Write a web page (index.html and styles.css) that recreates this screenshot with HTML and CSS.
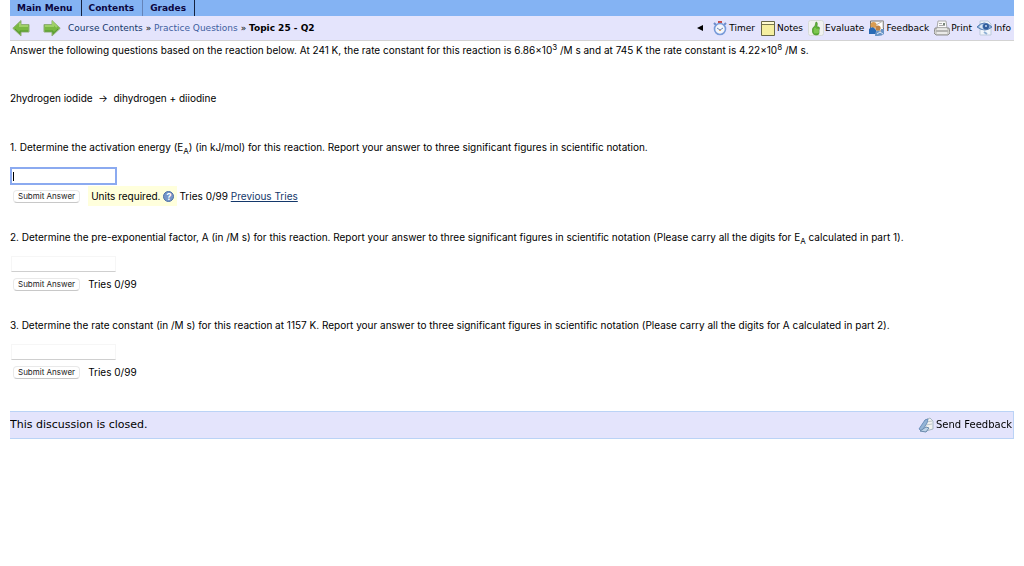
FILE: index.html
```html
<!DOCTYPE html>
<html lang="en">
<head>
  <meta charset="UTF-8">
  <title>Topic 25 - Q2</title>
  <link rel="stylesheet" href="styles.css">
</head>
<body>
  <nav class="menu">
    <a href="#">Main Menu</a>
    <a href="#">Contents</a>
    <a href="#">Grades</a>
  </nav>

  <div class="toolbar">
    <a class="arrow" href="#" aria-label="Previous">
      <svg width="18" height="18" viewBox="0 0 18 18"><path d="M9 1.500V5.500H17V13H9V17L.8 9.300Z" fill="#79b843" stroke="#8fae78"/><path d="M8 4V7H16" fill="none" stroke="#9fd069" stroke-width="2"/><path d="M3 10L8 14.500V12H16" fill="none" stroke="#54962f"/></svg>
    </a>
    <a class="arrow" href="#" aria-label="Next">
      <svg width="18" height="18" viewBox="0 0 18 18"><path d="M9 1.500V5.500H1V13H9V17L17.200 9.300Z" fill="#79b843" stroke="#8fae78"/><path d="M2 7H10V4L14 8" fill="none" stroke="#9fd069" stroke-width="2"/><path d="M2 12H10V14.500L15 10" fill="none" stroke="#54962f"/></svg>
    </a>
    <div class="crumbs">
      <a href="#">Course Contents</a> » <a class="light" href="#">Practice Questions</a> » <b>Topic 25 - Q2</b>
    </div>

    <div class="tools">
      <a class="collapse" href="#" aria-label="Collapse">
        <svg width="6" height="6" viewBox="0 0 6 6"><path d="M6 0V6L0 3Z" fill="#000"/></svg>
      </a>
      <a href="#">
        <svg width="16" height="16" viewBox="0 0 16 16"><path d="M6 1H10V3H6Z" fill="#c54b48"/><path d="M2 3L4 5M14 3L12 5" stroke="#6e8bc9" stroke-width="2"/><circle cx="8" cy="9" r="5.500" fill="#f3f6fc" stroke="#789bd9" stroke-width="1.600"/><path d="M5 8L8 10L11 8" fill="none" stroke="#7187ad"/><path d="M8 10V10.800" stroke="#d99446" stroke-width="2"/></svg>
        Timer
      </a>
      <a href="#">
        <svg width="16" height="16" viewBox="0 0 16 16"><path d="M1.500 1.500H14.500V15.500H1.500Z" fill="#f5efa0" stroke="#686848"/><path d="M2 2H14V4H2Z" fill="#fffbd0"/><path d="M2 4.500H14" stroke="#77764e"/></svg>
        Notes
      </a>
      <a href="#">
        <svg width="16" height="16" viewBox="0 0 16 16"><rect x=".5" y=".5" width="15" height="15" rx="2" fill="#f0f1ef" stroke="#d6dbd8"/><path d="M8 2C10 2 9 5 9 7H11Q12 8 11 10V13Q11 15 8 15Q5 15 4.500 12V9Q5 7 7 6Z" fill="#62b637" stroke="#458d29" stroke-width=".7"/><path d="M7 8V13M8 10H11M8 12H11" stroke="#97d66b"/></svg>
        Evaluate
      </a>
      <a href="#">
        <svg width="16" height="16" viewBox="0 0 16 16"><path d="M1.500 1H14.500V11H1.500Z" fill="#f8f8f5" stroke="#73706f"/><path d="M7 5L14 1V8" fill="#fff" stroke="#b9b7b2"/><circle cx="4.500" cy="5" r="3" fill="#d99c50"/><path d="M0 14V9Q4 5 7 10V14Z" fill="#2869b5"/><circle cx="9" cy="8" r="2.600" fill="#be8344"/><path d="M6 16Q6 10 10 11L12 13V9H15V14Q13 16 9 16Z" fill="#6994c7"/><path d="M8 14L11 12L14 14" fill="none" stroke="#dce9f6"/></svg>
        Feedback
      </a>
      <a href="#">
        <svg width="16" height="16" viewBox="0 0 16 16"><path d="M4 1H12L13 8H3Z" fill="#fafafa" stroke="#aaa"/><path d="M5 3.500H8M5 5.500H11" stroke="#aaa"/><path d="M9 3H11V5H9Z" fill="#788679"/><path d="M1 8H15L16 13L14 15H2L0 13Z" fill="#cfcfcb" stroke="#8e8e8c"/><path d="M3 9H13M3 13H13" stroke="#f4f4f2" stroke-width="1.500"/><path d="M2 11H14" stroke="#999"/></svg>
        Print
      </a>
      <a href="#">
        <svg width="16" height="16" viewBox="0 0 16 16"><path d="M3 1H11L14 4V15H3Z" fill="#f1f6fb" stroke="#bdcbdc"/><path d="M0 7Q7-1 15 7Q8 13 0 7Z" fill="#87acd5" stroke="#5981b7"/><path d="M2 7Q4 4 6 4Q4 7 7 10" fill="#dce8f5"/><circle cx="9" cy="6.500" r="3" fill="#315e9c"/><circle cx="9" cy="6" r="1" fill="#c9ddf2"/><path d="M7 12L10 14" stroke="#8eb0d4" stroke-width="2"/></svg>
        Info
      </a>
    </div>
  </div>

  <main>
    <p class="intro">Answer the following questions based on the reaction below. At 241 K, the rate constant for this reaction is 6.86×10<sup>3</sup> /M s and at 745 K the rate constant is 4.22×10<sup>8</sup> /M s.</p>
    <p class="reaction">2hydrogen iodide &nbsp;→&nbsp; dihydrogen + diiodine</p>

    <form class="question first">
      <label for="answer1">1. Determine the activation energy (E<sub>A</sub>) (in kJ/mol) for this reaction. Report your answer to three significant figures in scientific notation.</label>
      <input type="text" id="answer1" autofocus>
      <div class="submit">
        <button type="button">Submit Answer</button>
        <span class="units">Units required. <a class="help" href="#">?</a></span>
        <span>Tries 0/99 <a class="previous" href="#">Previous Tries</a></span>
      </div>
    </form>

    <form class="question">
      <label for="answer2">2. Determine the pre-exponential factor, A (in /M s) for this reaction. Report your answer to three significant figures in scientific notation (Please carry all the digits for E<sub>A</sub> calculated in part 1).</label>
      <input type="text" id="answer2">
      <div class="submit">
        <button type="button">Submit Answer</button>
        <span class="tries">Tries 0/99</span>
      </div>
    </form>

    <form class="question">
      <label for="answer3">3. Determine the rate constant (in /M s) for this reaction at 1157 K. Report your answer to three significant figures in scientific notation (Please carry all the digits for A calculated in part 2).</label>
      <input type="text" id="answer3">
      <div class="submit">
        <button type="button">Submit Answer</button>
        <span class="tries">Tries 0/99</span>
      </div>
    </form>
  </main>

  <footer class="discussion">
    <span>This discussion is closed.</span>
    <a href="#">
      <svg width="16" height="16" viewBox="0 0 16 16"><path d="M7 3L12 1L15 4V12L8 14L5 11Z" fill="#f2f3f1" stroke="#a7b6c4"/><path d="M8 5L14 4M8 8L14 7" stroke="#bdc5ca"/><path d="M1 12L7 3L10 2L9 6L4 14Z" fill="#94b4d6" stroke="#6d91bc"/><path d="M2 14L8 10L11 11L8 15Z" fill="#bdd3e8" stroke="#6888ab"/></svg>
      Send Feedback
    </a>
  </footer>
</body>
</html>
```
FILE: styles.css
```css
body {
  margin: 0 10px;
  font-family: Verdana, "DejaVu Sans", sans-serif;
  font-size: 9px;
  line-height: 14px;
  color: #000;
  background: #fff;
}

a {
  color: inherit;
  text-decoration: none;
}

svg {
  display: block;
  flex: none;
}

.menu {
  display: flex;
  height: 16px;
  background: #84b3f3;
}

.menu a {
  padding: 0 8px 0 7px;
  border-right: 1px solid #16223d;
  font-weight: bold;
  line-height: 16px;
  color: #0b0640;
}

.menu a:nth-child(2) {
  border-color: #6583b8;
}

.toolbar {
  display: flex;
  align-items: center;
  height: 24px;
  background: #e4e4fc;
  border-bottom: 1px solid #d3d3d3;
}

.arrow {
  margin-left: 2px;
}

.arrow + .arrow {
  margin-left: 13px;
}

.crumbs {
  margin-left: 7px;
}

.crumbs a {
  color: #14386b;
}

.crumbs .light {
  color: #3e5f9f;
}

.tools {
  display: flex;
  gap: 5px;
  margin-left: auto;
  padding-right: 3px;
}

.tools a {
  display: flex;
  align-items: center;
  gap: 1px;
}

.tools .collapse {
  margin-right: 4px;
}

main {
  padding-bottom: 5px;
  font-family: Inter, sans-serif;
  font-size: 10px;
}

sup,
sub {
  font-size: 8px;
  line-height: 0;
}

p {
  margin: 0;
}

.intro {
  padding-top: 2px;
}

.reaction {
  margin: 34px 0 35px;
}

.question {
  margin-bottom: 24px;
}

.question label {
  display: block;
}

.question input {
  display: block;
  box-sizing: border-box;
  width: 105px;
  height: 16px;
  margin: 12px 0 0 1px;
  padding: 0 2px;
  border: 1px solid #f6f6f6;
  border-bottom-color: #cfcfcf;
  font: inherit;
}

.first input {
  margin-top: 14px;
}

.question input:focus {
  border-color: #8baaf0;
  outline: 1px solid #8baaf0;
  background: linear-gradient(#000, #000) 1px 3px / 1px 9px no-repeat;
  caret-color: transparent;
}

.submit {
  display: flex;
  align-items: center;
  height: 20px;
  margin-top: 2px;
}

.submit button {
  height: 13px;
  margin: 0 8px 0 3px;
  padding: 0 4px;
  border: 1px solid #e9e9e9;
  border-bottom-color: #c8c8c8;
  border-radius: 4px;
  background: #fff;
  color: #222;
  font: 8px/10px Inter, sans-serif;
}

.units {
  display: flex;
  align-items: center;
  gap: 3px;
  height: 20px;
  margin-right: 2px;
  padding: 0 3px;
  background: #ffffdc;
}

.help {
  width: 9px;
  border: 1px solid #496fa7;
  border-radius: 50%;
  background: #7795c8;
  color: #fff;
  font-size: 9px;
  font-weight: bold;
  line-height: 9px;
  text-align: center;
}

.previous {
  color: #14386b;
  text-decoration: underline;
}

.discussion {
  display: flex;
  align-items: center;
  justify-content: space-between;
  height: 26px;
  border: 1px solid #bbd3f6;
  border-left: 0;
  background: #e4e4fc;
  font-size: 11px;
}

.discussion a {
  display: flex;
  align-items: center;
  gap: 2px;
  padding-right: 1px;
  font-size: 10px;
}
```
